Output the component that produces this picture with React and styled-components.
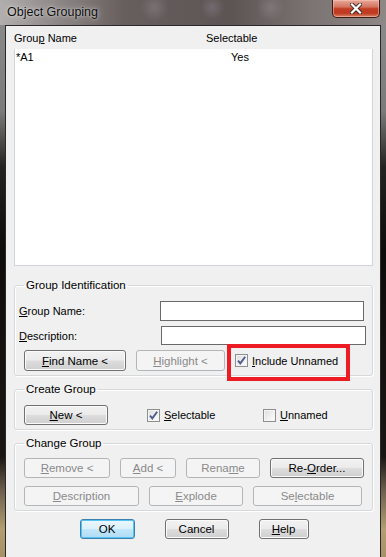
import React from "react";
import styled, { createGlobalStyle, css } from "styled-components";

const Global = createGlobalStyle`
  html, body { margin: 0; padding: 0; background: #000; }
  body { font-family: "Liberation Sans", Arial, sans-serif; font-size: 11px; color: #000; }
  *, *::before, *::after { box-sizing: border-box; }
`;

const Window = styled.div`
  width: 386px;
  height: 557px;
  display: flex;
  flex-direction: column;
  padding: 0 5px;
  overflow: hidden;
  background: linear-gradient(
    180deg,
    #8e8e8e 0%,
    #7a7a7a 20%,
    #242220 30%,
    #0e0c0b 45%,
    #1a1614 82%,
    #6c5e4c 88%,
    #b29e72 95%,
    #a89066 100%
  );
`;

const TitleBar = styled.div`
  height: 25px;
  flex: none;
  margin: 0 -5px;
  padding: 0 6px 0 7px;
  display: flex;
  align-items: flex-start;
  justify-content: space-between;
  background:
    radial-gradient(circle at 40% 30%, rgba(160, 150, 160, 0.35) 0, rgba(0, 0, 0, 0) 14px),
    radial-gradient(circle at 55% 30%, rgba(160, 150, 170, 0.3) 0, rgba(0, 0, 0, 0) 12px),
    radial-gradient(circle at 70% 30%, rgba(170, 160, 170, 0.3) 0, rgba(0, 0, 0, 0) 14px),
    linear-gradient(90deg, #b1afae 0%, #8f8988 14%, #675f5e 32%, #5d5554 60%, #7a7372 80%, #8d8786 100%);
`;

const Title = styled.span`
  font-family: "Liberation Sans", Arial, sans-serif;
  font-size: 12.5px;
  line-height: 25px;
  color: #0c0c0c;
  text-shadow: 0 0 6px rgba(255, 255, 255, 0.7), 0 0 2px rgba(255, 255, 255, 0.6);
`;

const CloseButton = styled.div`
  width: 48px;
  height: 18px;
  display: flex;
  align-items: center;
  justify-content: center;
  border: 1px solid #3d1a13;
  border-top: none;
  border-radius: 0 0 5px 5px;
  box-shadow: inset 0 0 0 1px rgba(255, 210, 200, 0.45);
  background: linear-gradient(180deg, #e7a898 0%, #d57562 40%, #c13c22 52%, #be3a20 78%, #d9876a 100%);
`;

const Client = styled.div`
  flex: 1;
  display: flex;
  flex-direction: column;
  background: #f0f0f0;
  border: 1px solid #2a2828;
  border-bottom: none;
  padding: 0 7px 0 8px;
`;

const ListHeader = styled.div`
  height: 23px;
  display: grid;
  grid-template-columns: 192px 1fr;
  align-items: center;
`;

const ListBox = styled.div`
  height: 217px;
  background: #fff;
  border: 1px solid #d2d4dc;
  border-top: none;
`;

const ListRow = styled.div`
  height: 16px;
  display: grid;
  grid-template-columns: 215px 1fr;
  align-items: center;
  padding-left: 1px;
`;

const Key = styled.span`
  text-decoration: underline;
  text-underline-offset: 1px;
`;

const Group = styled.fieldset`
  margin: ${(p) => p.$mt}px 0 0;
  min-width: 0;
  padding: ${(p) => p.$pt}px 4px 4px 4px;
  border: 1px solid #d5d9dc;
  border-radius: 3px;
  box-shadow: inset 1px 1px 0 #fff, 1px 1px 0 #fff;
  display: flex;
  flex-direction: column;
  gap: ${(p) => p.$gap || 0}px;
`;

const Legend = styled.legend`
  padding: 0 2px;
  margin-left: 5px;
  line-height: 14px;
  font-size: 11.5px;
`;

const FieldRow = styled.div`
  display: flex;
  align-items: center;
  height: ${(p) => p.$h}px;
`;

const Label = styled.span`
  width: ${(p) => 141 + (p.$shift || 0)}px;
  flex: none;
`;

const TextInput = styled.div`
  width: ${(p) => p.$w}px;
  height: 100%;
  background: #fff;
  border: 1px solid #6a6a6a;
`;

const ButtonRow = styled.div`
  display: flex;
  align-items: center;
  gap: ${(p) => p.$gap ?? 10}px;
  padding-left: 5px;
`;

const Button = styled.div`
  width: ${(p) => p.$w}px;
  height: ${(p) => p.$h || 20}px;
  flex: none;
  display: flex;
  align-items: center;
  justify-content: center;
  font-size: 11.5px;
  border-radius: 3px;
  border: 1px solid #707070;
  box-shadow: inset 0 0 0 1px #fbfbfb;
  background: linear-gradient(180deg, #f2f2f2 0%, #ebebeb 48%, #dddddd 52%, #cfcfcf 100%);
  ${(p) =>
    p.$disabled &&
    css`
      border-color: #b3b6b8;
      background: #f4f4f4;
      box-shadow: none;
      color: #8a8a8a;
    `}
  ${(p) =>
    p.$default &&
    css`
      border-color: #3c7fb1;
      box-shadow: inset 0 0 0 1px #54c4f2;
      background: linear-gradient(180deg, #ecf7fd 0%, #dcf1fc 48%, #c3e7fb 52%, #aedcf4 100%);
    `}
`;

const CheckLabel = styled.label`
  display: flex;
  align-items: center;
  gap: 4px;
  width: ${(p) => (p.$w ? `${p.$w}px` : "auto")};
  margin-left: ${(p) => p.$ml || 0}px;
  font-size: 11px;
  position: relative;
  ${(p) =>
    p.$marked &&
    css`
      &::after {
        content: "";
        position: absolute;
        top: -10px;
        left: -8px;
        width: 123px;
        height: 37px;
        border: 4px solid #ed1c24;
      }
    `}
`;

const Box = styled.span`
  width: 13px;
  height: 13px;
  flex: none;
  display: flex;
  align-items: center;
  justify-content: center;
  border: 1px solid #8e8f8f;
  background: linear-gradient(135deg, #dcdcdc 0%, #f2f2f2 60%, #ffffff 100%);
  box-shadow: inset 0 0 0 1px #f4f4f4;
`;

const Check = ({ on, label, ml, w, marked }) => (
  <CheckLabel $ml={ml} $w={w} $marked={marked}>
    <Box>
      {on && (
        <svg width="11" height="11" viewBox="0 0 11 11">
          <path d="M2 5.6 L4.3 8.4 L9.2 1.8" fill="none" stroke="#4c5d8e" strokeWidth="1.9" />
        </svg>
      )}
    </Box>
    {label}
  </CheckLabel>
);

const BottomRow = styled.div`
  display: flex;
  justify-content: center;
  gap: 30px;
  margin-top: 8px;
  padding-left: 1px;
`;

export default function App() {
  return (
    <>
      <Global />
      <Window>
        <TitleBar>
          <Title>Object Grouping</Title>
          <CloseButton>
            <svg width="12" height="11" viewBox="0 0 12 11">
              <path d="M2 1.5 L10 9.5 M10 1.5 L2 9.5" stroke="#3b2b28" strokeWidth="4" strokeLinecap="square" />
              <path d="M2 1.5 L10 9.5 M10 1.5 L2 9.5" stroke="#fff" strokeWidth="2.2" strokeLinecap="square" />
            </svg>
          </CloseButton>
        </TitleBar>
        <Client>
          <ListHeader>
            <span>
              Grou<Key>p</Key> Name
            </span>
            <span>Selectable</span>
          </ListHeader>
          <ListBox>
            <ListRow>
              <span>*A1</span>
              <span>Yes</span>
            </ListRow>
          </ListBox>

          <Group $mt={12} $pt={9} $gap={5}>
            <Legend>Group Identification</Legend>
            <FieldRow $h={20}>
              <Label>
                <Key>G</Key>roup Name:
              </Label>
              <TextInput $w={204} />
            </FieldRow>
            <FieldRow $h={19}>
              <Label $shift={1}>
                <Key>D</Key>escription:
              </Label>
              <TextInput $w={205} />
            </FieldRow>
            <ButtonRow>
              <Button $w={102} $h={21}>
                <span>
                  <Key>F</Key>ind Name &lt;
                </span>
              </Button>
              <Button $w={89} $h={21} $disabled>
                <span>
                  <Key>H</Key>ighlight &lt;
                </span>
              </Button>
              <Check on marked label={<span><Key>I</Key>nclude Unnamed</span>} />
            </ButtonRow>
          </Group>

          <Group $mt={6} $pt={9}>
            <Legend>Create Group</Legend>
            <ButtonRow $gap={0}>
              <Button $w={84}>
                <span>
                  <Key>N</Key>ew &lt;
                </span>
              </Button>
              <Check on ml={39} w={116} label={<span><Key>S</Key>electable</span>} />
              <Check label={<span><Key>U</Key>nnamed</span>} />
            </ButtonRow>
          </Group>

          <Group $mt={6} $pt={8} $gap={8}>
            <Legend>Change Group</Legend>
            <ButtonRow>
              <Button $w={86} $disabled>
                <span>
                  <Key>R</Key>emove &lt;
                </span>
              </Button>
              <Button $w={56} $disabled>
                <span>
                  <Key>A</Key>dd &lt;
                </span>
              </Button>
              <Button $w={74} $disabled>
                <span>
                  Rena<Key>m</Key>e
                </span>
              </Button>
              <Button $w={94}>
                <span>
                  Re-<Key>O</Key>rder...
                </span>
              </Button>
            </ButtonRow>
            <ButtonRow>
              <Button $w={115} $disabled>
                <span>
                  <Key>D</Key>escription
                </span>
              </Button>
              <Button $w={94} $disabled>
                <span>
                  <Key>E</Key>xplode
                </span>
              </Button>
              <Button $w={109} $disabled>
                <span>
                  Se<Key>l</Key>ectable
                </span>
              </Button>
            </ButtonRow>
          </Group>

          <BottomRow>
            <Button $w={55} $default>
              OK
            </Button>
            <Button $w={64}>Cancel</Button>
            <Button $w={50}>
              <span>
                <Key>H</Key>elp
              </span>
            </Button>
          </BottomRow>
        </Client>
      </Window>
    </>
  );
}
